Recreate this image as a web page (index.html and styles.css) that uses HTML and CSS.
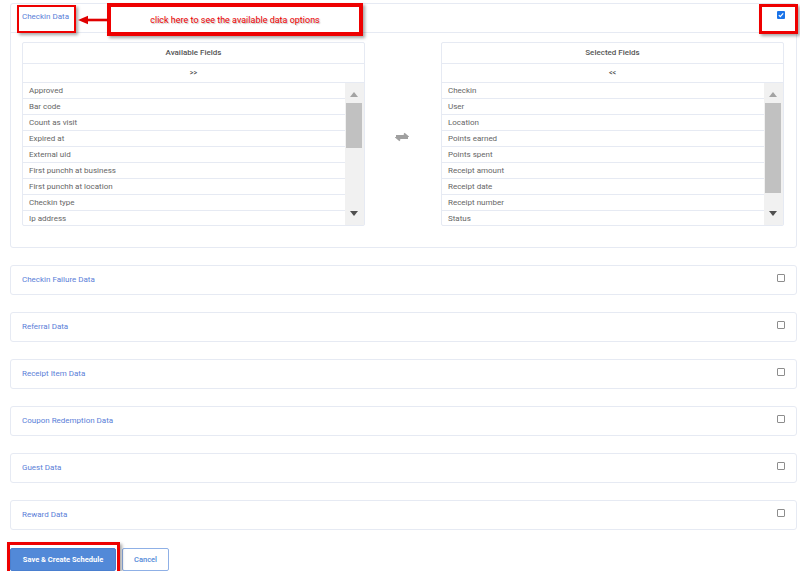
FILE: index.html
```html
<!DOCTYPE html>
<html>
<head>
<meta charset="utf-8">
<link rel="stylesheet" href="styles.css">
</head>
<body>
<div class="page">
  <div class="panel panel-open">
    <div class="panel-head head-open">
      <a class="panel-title">Checkin Data</a>
      <span class="cb cb-checked"><svg viewBox="0 0 8 8" width="8" height="8"><path d="M1.8 4.2 L3.3 5.7 L6.2 2.4" fill="none" stroke="#fff" stroke-width="1.2"/></svg></span>
    </div>
    <div class="panel-body">
      <div class="fbox">
        <div class="fbox-title">Available Fields</div>
        <div class="fbox-move">&gt;&gt;</div>
        <div class="fbox-list">
          <ul class="items">
            <li>Approved</li>
            <li>Bar code</li>
            <li>Count as visit</li>
            <li>Expired at</li>
            <li>External uid</li>
            <li>First punchh at business</li>
            <li>First punchh at location</li>
            <li>Checkin type</li>
            <li>Ip address</li>
          </ul>
          <div class="sbar">
            <span class="s-up"></span>
            <span class="s-thumb"></span>
            <span class="s-down"></span>
          </div>
        </div>
      </div>
      <div class="swap">
        <svg viewBox="0 0 14 10" width="14" height="10"><path d="M1 4 H12 L9 1.5 M13 6 H2 L5 8.5" fill="none" stroke="#a0a0a0" stroke-width="1.8"/></svg>
      </div>
      <div class="fbox">
        <div class="fbox-title">Selected Fields</div>
        <div class="fbox-move">&lt;&lt;</div>
        <div class="fbox-list">
          <ul class="items">
            <li>Checkin</li>
            <li>User</li>
            <li>Location</li>
            <li>Points earned</li>
            <li>Points spent</li>
            <li>Receipt amount</li>
            <li>Receipt date</li>
            <li>Receipt number</li>
            <li>Status</li>
          </ul>
          <div class="sbar">
            <span class="s-up"></span>
            <span class="s-thumb thumb-long"></span>
            <span class="s-down"></span>
          </div>
        </div>
      </div>
    </div>
    <div class="mark mark-title"></div>
    <div class="mark mark-note">click here to see the available data options</div>
    <div class="mark mark-cb"></div>
    <svg class="arrow" viewBox="0 0 30 10" width="30" height="10"><path d="M9 5 H30" stroke="#e00000" stroke-width="2.6"/><path d="M0 5 L10 0.8 L10 9.2 Z" fill="#e00000"/></svg>
  </div>

  <div class="panel"><div class="panel-head"><a class="panel-title">Checkin Failure Data</a><span class="cb"></span></div></div>
  <div class="panel"><div class="panel-head"><a class="panel-title">Referral Data</a><span class="cb"></span></div></div>
  <div class="panel"><div class="panel-head"><a class="panel-title">Receipt Item Data</a><span class="cb"></span></div></div>
  <div class="panel"><div class="panel-head"><a class="panel-title">Coupon Redemption Data</a><span class="cb"></span></div></div>
  <div class="panel"><div class="panel-head"><a class="panel-title">Guest Data</a><span class="cb"></span></div></div>
  <div class="panel"><div class="panel-head"><a class="panel-title">Reward Data</a><span class="cb"></span></div></div>

  <div class="actions">
    <button class="btn btn-primary">Save &amp; Create Schedule<span class="mark mark-btn"></span></button>
    <button class="btn btn-default">Cancel</button>
  </div>
</div>
</body>
</html>
```

FILE: styles.css
```css
html, body {
  margin: 0;
  padding: 0;
  background: #fff;
}
body {
  font-family: Roboto, "Liberation Sans", Arial, sans-serif;
  font-size: 8px;
  color: #666;
}
.page {
  padding: 3px 3px 0 10px;
}
.panel {
  border: 1px solid #e6eaf3;
  border-radius: 3px;
  margin-bottom: 17px;
  background: #fff;
}
.panel-open {
  position: relative;
}
.panel-head {
  height: 28px;
  display: flex;
  align-items: flex-start;
  justify-content: space-between;
  padding: 0 11px 0 11px;
}
.panel-head .panel-title {
  margin-top: 9px;
}
.panel-head .cb {
  margin-top: 8px;
}
.head-open {
  border-bottom: 1px solid #e6eaf3;
  height: 28px;
}
.head-open .panel-title {
  margin-top: 8px;
}
.head-open .cb {
  margin-top: 7px;
}
.panel-title {
  color: #5b80d8;
  font-size: 8px;
  text-decoration: none;
}
.cb {
  width: 6px;
  height: 6px;
  border: 1px solid #8d8d8d;
  border-radius: 1px;
  background: #fff;
  display: block;
}
.panel-head .cb-checked {
  width: 8px;
  height: 8px;
  border: none;
  background: #1a73e8;
  display: flex;
}
.panel-body {
  display: grid;
  grid-template-columns: 343px 76px 343px;
  padding: 9px 12px 21px 11px;
}
.fbox {
  border: 1px solid #e6eaf3;
  border-radius: 2px;
}
.fbox-title {
  height: 20px;
  line-height: 20px;
  text-align: center;
  font-weight: 500;
  color: #555;
  border-bottom: 1px solid #e6eaf3;
}
.fbox-move {
  height: 18px;
  line-height: 18px;
  text-align: center;
  font-size: 7px;
  font-weight: 500;
  color: #555;
  border-bottom: 1px solid #e6eaf3;
}
.fbox-list {
  height: 142px;
  display: flex;
  overflow: hidden;
}
.items {
  list-style: none;
  margin: 0;
  padding: 0;
  flex: 1;
}
.items li {
  height: 15px;
  line-height: 15px;
  padding-left: 6px;
  border-bottom: 1px solid #e6eaf3;
  color: #666;
}
.sbar {
  width: 19px;
  background: #f1f1f1;
  position: relative;
}
.s-up {
  position: absolute;
  left: 5px;
  top: 9px;
  border-left: 4.5px solid transparent;
  border-right: 4.5px solid transparent;
  border-bottom: 5px solid #a3a3a3;
}
.s-down {
  position: absolute;
  left: 5px;
  bottom: 9px;
  border-left: 4.5px solid transparent;
  border-right: 4.5px solid transparent;
  border-top: 5px solid #505050;
}
.s-thumb {
  position: absolute;
  left: 1px;
  right: 2px;
  top: 20px;
  height: 45px;
  background: #c1c1c1;
}
.thumb-long {
  height: 90px;
}
.swap {
  display: flex;
  align-items: center;
  justify-content: center;
  padding-top: 5px;
  padding-right: 2px;
}
.mark {
  position: absolute;
  box-sizing: border-box;
  border: 3px solid #ee0000;
  box-shadow: 2px 2px 3px rgba(0,0,0,0.35);
}
.mark-title {
  left: 6px;
  top: 1px;
  width: 59px;
  height: 28px;
  border-width: 2px;
}
.mark-note {
  left: 96px;
  top: -1px;
  width: 256px;
  height: 33px;
  border-width: 4px;
  color: #ee0000;
  font-size: 9px;
  display: flex;
  align-items: center;
  justify-content: center;
  text-shadow: 1px 1px 1px rgba(0,0,0,0.25);
}
.mark-cb {
  left: 748px;
  top: 0;
  width: 39px;
  height: 30px;
}
.arrow {
  position: absolute;
  left: 67px;
  top: 11px;
}
.actions {
  display: flex;
  gap: 6px;
  margin-top: 18px;
}
.btn {
  font-family: Roboto, "Liberation Sans", Arial, sans-serif;
  font-size: 7.5px;
  font-weight: 700;
  height: 23px;
  border-radius: 2px;
  padding: 0;
  white-space: nowrap;
  cursor: pointer;
}
.btn-primary {
  position: relative;
  width: 106px;
  background: #5289d8;
  color: #fff;
  border: 1px solid #4a7fcf;
}
.btn-default {
  width: 47px;
  background: #fff;
  color: #5289d8;
  border: 1px solid #8fb0e6;
  font-weight: 500;
}
.mark-btn {
  left: -4px;
  top: -7px;
  width: 113px;
  height: 36px;
  border-width: 3px;
}
```
